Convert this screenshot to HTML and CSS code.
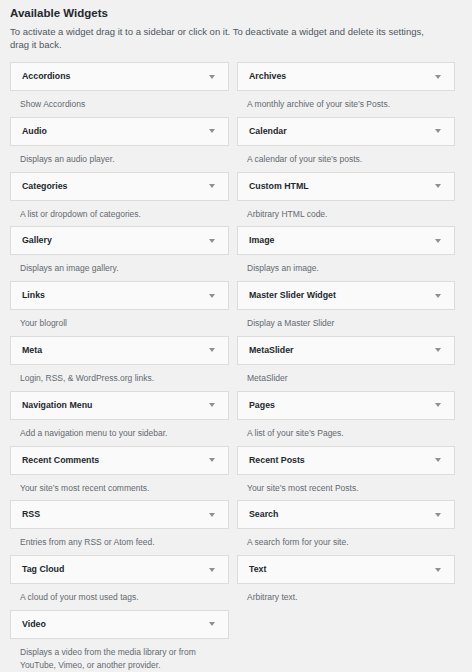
FILE: index.html
```html
<!DOCTYPE html>
<html lang="en">
<head>
    <meta charset="UTF-8">
    <meta name="viewport" content="width=device-width, initial-scale=1.0">
    <title>Available Widgets</title>
    <link rel="stylesheet" href="styles.css">
</head>
<body>
<div class="panel">
    <h2 class="panel-title">Available Widgets</h2>
    <p class="panel-desc">To activate a widget drag it to a sidebar or click on it. To deactivate a widget and delete its settings, drag it back.</p>

    <div class="widget-list">
        <div class="widget"><div class="widget-top">Accordions<span class="arrow"></span></div><div class="widget-desc">Show Accordions</div></div>
        <div class="widget"><div class="widget-top">Archives<span class="arrow"></span></div><div class="widget-desc">A monthly archive of your site’s Posts.</div></div>
        <div class="widget"><div class="widget-top">Audio<span class="arrow"></span></div><div class="widget-desc">Displays an audio player.</div></div>
        <div class="widget"><div class="widget-top">Calendar<span class="arrow"></span></div><div class="widget-desc">A calendar of your site’s posts.</div></div>
        <div class="widget"><div class="widget-top">Categories<span class="arrow"></span></div><div class="widget-desc">A list or dropdown of categories.</div></div>
        <div class="widget"><div class="widget-top">Custom HTML<span class="arrow"></span></div><div class="widget-desc">Arbitrary HTML code.</div></div>
        <div class="widget"><div class="widget-top">Gallery<span class="arrow"></span></div><div class="widget-desc">Displays an image gallery.</div></div>
        <div class="widget"><div class="widget-top">Image<span class="arrow"></span></div><div class="widget-desc">Displays an image.</div></div>
        <div class="widget"><div class="widget-top">Links<span class="arrow"></span></div><div class="widget-desc">Your blogroll</div></div>
        <div class="widget"><div class="widget-top">Master Slider Widget<span class="arrow"></span></div><div class="widget-desc">Display a Master Slider</div></div>
        <div class="widget"><div class="widget-top">Meta<span class="arrow"></span></div><div class="widget-desc">Login, RSS, &amp; WordPress.org links.</div></div>
        <div class="widget"><div class="widget-top">MetaSlider<span class="arrow"></span></div><div class="widget-desc">MetaSlider</div></div>
        <div class="widget"><div class="widget-top">Navigation Menu<span class="arrow"></span></div><div class="widget-desc">Add a navigation menu to your sidebar.</div></div>
        <div class="widget"><div class="widget-top">Pages<span class="arrow"></span></div><div class="widget-desc">A list of your site’s Pages.</div></div>
        <div class="widget"><div class="widget-top">Recent Comments<span class="arrow"></span></div><div class="widget-desc">Your site’s most recent comments.</div></div>
        <div class="widget"><div class="widget-top">Recent Posts<span class="arrow"></span></div><div class="widget-desc">Your site’s most recent Posts.</div></div>
        <div class="widget"><div class="widget-top">RSS<span class="arrow"></span></div><div class="widget-desc">Entries from any RSS or Atom feed.</div></div>
        <div class="widget"><div class="widget-top">Search<span class="arrow"></span></div><div class="widget-desc">A search form for your site.</div></div>
        <div class="widget"><div class="widget-top">Tag Cloud<span class="arrow"></span></div><div class="widget-desc">A cloud of your most used tags.</div></div>
        <div class="widget"><div class="widget-top">Text<span class="arrow"></span></div><div class="widget-desc">Arbitrary text.</div></div>
        <div class="widget"><div class="widget-top">Video<span class="arrow"></span></div><div class="widget-desc">Displays a video from the media library or from YouTube, Vimeo, or another provider.</div></div>
    </div>
</div>
</body>
</html>
```

FILE: styles.css
```css
/* Widgets admin screen */
body {
    font-family: "Liberation Sans", Arial, sans-serif;
    background-color: #f1f1f1;
    color: #23282d;
    margin: 0;
}
.panel {
    padding: 6px 10px 0 10px;
    width: 445px;
}
.panel-title {
    font-size: 11.5px;
    font-weight: bold;
    margin: 0;
    line-height: 15px;
}
.panel-desc {
    font-size: 9.5px;
    line-height: 13px;
    color: #50575e;
    margin: 4px 0 11px 0;
    max-width: 425px;
}
.widget-list {
    display: grid;
    grid-template-columns: 219px 218px;
    column-gap: 8px;
}
.widget-top {
    height: 27px;
    line-height: 27px;
    background-color: #fafafa;
    border: 1px solid #dcdcdc;
    padding: 0 11px;
    font-size: 8.8px;
    font-weight: bold;
    display: flex;
    justify-content: space-between;
    align-items: center;
}
.arrow {
    width: 0;
    height: 0;
    border-left: 3px solid transparent;
    border-right: 3px solid transparent;
    border-top: 4px solid #8c8f94;
    margin-right: 2px;
}
.widget-desc {
    font-size: 8.5px;
    line-height: 13px;
    color: #646970;
    padding: 7px 10px 5.8px 10px;
}
```
